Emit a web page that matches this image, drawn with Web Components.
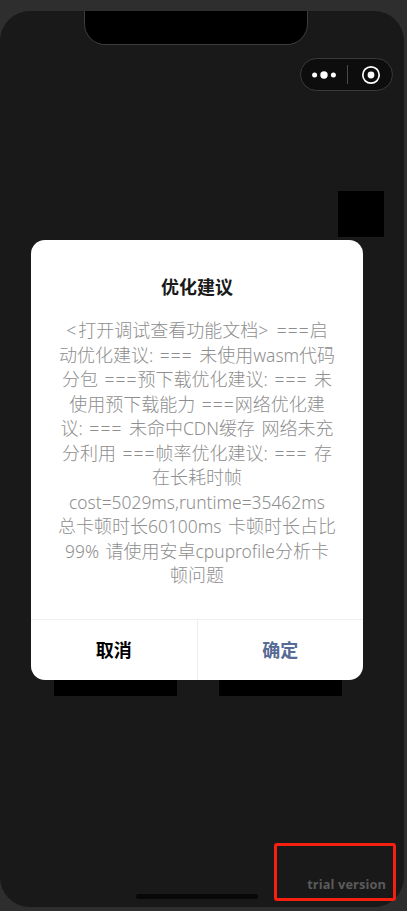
<!DOCTYPE html>
<html lang="zh-CN"><head><meta charset="utf-8"><title>优化建议</title>
<style>
html,body{margin:0;padding:0;height:100%;background:#2e2e2e;overflow:hidden}
body{font-family:"Noto Sans","Noto Sans CJK SC",sans-serif}
advice-dialog .l{font-family:"Noto Sans",sans-serif;font-size:17.4px;word-spacing:2px;line-height:1}
advice-dialog .e{letter-spacing:1.1px}
advice-dialog .a{letter-spacing:2px}
</style></head><body>
<phone-frame>
  <dim-block slot="top" style="--w:46px;--h:46px"></dim-block>
  <dim-block slot="low" style="--w:123px;--h:16px"></dim-block>
  <dim-block slot="low" style="--w:123px;--h:16px"></dim-block>
</phone-frame>
<advice-dialog heading="优化建议" cancel="取消" confirm="确定">
&lt;打开调试查看功能文档&gt; ===启<br>动优化建议: === 未使用wasm代码<br>分包 ===预下载优化建议: === 未<br>使用预下载能力 ===网络优化建<br>议: === 未命中CDN缓存 网络未充<br>分利用 ===帧率优化建议: === 存<br>在长耗时帧<br>cost=5029ms,runtime=35462ms<br>总卡顿时长60100ms 卡顿时长占比<br>99% 请使用安卓cpuprofile分析卡<br>顿问题
</advice-dialog>
<red-mark></red-mark>
<script>
function def(name,html){customElements.define(name,class extends HTMLElement{constructor(){super();this.attachShadow({mode:'open'}).innerHTML=html}})}
def('dim-block',`<style>:host{display:block;width:var(--w);height:var(--h);background:#000}</style>`);
def('menu-capsule',`<style>
:host{display:flex;align-items:center;box-sizing:border-box;width:93px;height:33px;border-radius:17px;background:#0d0d0d;border:1px solid #3a3a3a;padding-left:11px}
svg{display:block;flex:none}
.d{width:1px;height:19px;background:#4a4a4a;margin:0 13px 0 11px;flex:none}
</style><svg width="24" height="10" viewBox="0 0 24 10"><circle cx="2.6" cy="5" r="2.5" fill="#fff"/><circle cx="12" cy="5" r="3.7" fill="#fff"/><circle cx="21.4" cy="5" r="2.5" fill="#fff"/></svg><div class="d"></div><svg width="20" height="20" viewBox="0 0 20 20"><circle cx="10" cy="10" r="8.2" fill="none" stroke="#fff" stroke-width="1.7"/><circle cx="10" cy="10" r="3.4" fill="#fff"/></svg>`);
def('phone-frame',`<style>
:host{display:flex;flex-direction:column;box-sizing:border-box;margin-top:11px;width:404px;height:896px;background:#191919;border-radius:30px;overflow:hidden}
.notch{align-self:center;margin-left:-12px;box-sizing:border-box;width:224px;height:34px;background:#000;border:1px solid #3c3c3c;border-top:0;border-radius:0 0 21px 21px;flex:none}
.cap{display:flex;justify-content:flex-end;padding:13px 11px 0 0}
.top{display:flex;justify-content:flex-end;padding:100px 20px 0 0}
.low{display:flex;gap:42px;padding:443px 0 0 54px}
.foot{display:flex;flex-direction:column;margin-top:auto;padding-bottom:8px}
.trial{align-self:flex-end;margin-right:18px;font:700 12.8px/14px "Open Sans",sans-serif;color:#5b5b5b;letter-spacing:.1px}
.home{align-self:flex-start;margin:3px 0 0 136px;width:122px;height:5px;border-radius:3px;background:#080808}
</style><div class="notch"></div><div class="cap"><menu-capsule></menu-capsule></div><div class="top"><slot name="top"></slot></div><div class="low"><slot name="low"></slot></div><div class="foot"><div class="trial">trial version</div><div class="home"></div></div>`);
customElements.define('advice-dialog',class extends HTMLElement{constructor(){super();const s=this.attachShadow({mode:'open'});
s.innerHTML=`<style>
:host{position:absolute;left:31px;top:240px;width:332px;height:440px;display:flex;flex-direction:column;background:#fff;border-radius:14px;overflow:hidden;text-align:center}
h2{margin:0;padding:34px 0 0;font:700 18px/24px "Noto Sans CJK SC",sans-serif;color:#1a1a1a}
.b{flex:1;padding-top:19px;font:300 18px/24.5px "Noto Sans CJK SC",sans-serif;color:#8e8e8e;white-space:nowrap}
.f{display:flex;height:60px;border-top:1px solid #efefef;font:700 18px/59px "Noto Sans CJK SC",sans-serif}
.f div{flex:1}.c{color:#000;border-right:1px solid #efefef}.o{color:#576b95}
</style><h2></h2><div class="b"><slot></slot></div><div class="f"><div class="c"></div><div class="o"></div></div>`;
s.querySelector('h2').textContent=this.getAttribute('heading');s.querySelector('.c').textContent=this.getAttribute('cancel');s.querySelector('.o').textContent=this.getAttribute('confirm');
/* Latin runs use a separate, slightly smaller face than the CJK runs */
const esc=t=>t.replace(/&/g,'&amp;').replace(/</g,'&lt;').replace(/>/g,'&gt;');
for(const n of [...this.childNodes]){if(n.nodeType!==3)continue;const w=document.createElement('span');
w.innerHTML=esc(n.nodeValue.trim()).replace(/(?:&lt;|&gt;|[\x20-\x7e])+/g,m=>{
 if(/^&[lg]t;/.test(m)&&m.length<=4)return `<span class="l a">${m}</span>`;
 return `<span class="l">${m.replace(/&gt; /,'<span class="a">&gt;</span> ').replace(/===/g,'<span class="e">===</span>')}</span>`;});
n.replaceWith(w);}
}});
def('red-mark',`<style>:host{position:absolute;left:274px;top:843px;width:122px;height:58px;box-sizing:border-box;border:3.5px solid #f5200f;border-radius:3px}</style>`);
</script>
</body></html>
